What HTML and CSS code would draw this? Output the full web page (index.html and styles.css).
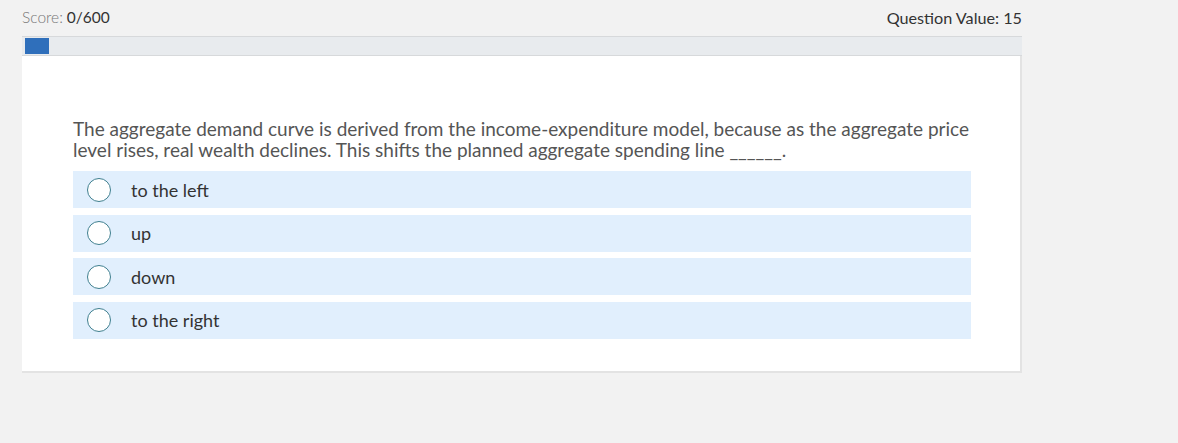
FILE: index.html
```html
<!DOCTYPE html>
<html>
<head>
<meta charset="utf-8">
<link rel="stylesheet" href="styles.css">
</head>
<body>
<div class="wrap">
  <div class="topbar">
    <div class="score"><span class="score-label">Score:</span> <span class="score-val">0/600</span></div>
    <div class="qvalue">Question Value: 15</div>
  </div>
  <div class="progress"><div class="progress-fill"></div></div>
  <div class="card">
    <p class="question">The aggregate demand curve is derived from the income-expenditure model, because as the aggregate price level rises, real wealth declines. This shifts the planned aggregate spending line ______.</p>
    <div class="options">
      <label class="option"><span class="radio"></span><span class="opt-text">to the left</span></label>
      <label class="option"><span class="radio"></span><span class="opt-text">up</span></label>
      <label class="option"><span class="radio"></span><span class="opt-text">down</span></label>
      <label class="option"><span class="radio"></span><span class="opt-text">to the right</span></label>
    </div>
  </div>
</div>
</body>
</html>
```
FILE: styles.css
```css
html, body {
  margin: 0;
  padding: 0;
  background: #f2f2f2;
}
body {
  font-family: Lato, "Open Sans", sans-serif;
  color: #333;
}
.wrap {
  width: 1000px;
  margin-left: 22px;
}
.topbar {
  display: flex;
  justify-content: space-between;
  align-items: center;
  height: 34px;
  padding-bottom: 2px;
}
.score {
  font-size: 15.5px;
}
.score-label {
  color: #777;
  font-weight: 300;
}
.score-val {
  color: #333;
}
.qvalue {
  color: #333;
  font-size: 16.2px;
}
.progress {
  height: 16px;
  background: #e8ebee;
  border-top: 1px solid #d7d9db;
  border-bottom: 1px solid #d7d9db;
  padding: 1px 3px;
}
.progress-fill {
  width: 24px;
  height: 16px;
  background: #2f6fbb;
}
.card {
  background: #fff;
  border-right: 2px solid #e3e3e3;
  border-bottom: 2px solid #e3e3e3;
  box-sizing: border-box;
  height: 317px;
  padding: 62px 51px 0 51px;
}
.question {
  margin: 0 0 11px 0;
  font-size: 19px;
  line-height: 21px;
  color: #555;
}
.options {
  display: flex;
  flex-direction: column;
  gap: 6.5px;
  width: 898px;
}
.option {
  display: flex;
  align-items: center;
  height: 37px;
  background: #e1effd;
  padding-left: 14px;
}
.radio {
  width: 22px;
  height: 22px;
  border: 1.5px solid #3f7f8f;
  border-radius: 50%;
  background: #fff;
  flex: none;
}
.opt-text {
  margin-left: 20px;
  font-size: 18px;
  color: #333;
}
```
